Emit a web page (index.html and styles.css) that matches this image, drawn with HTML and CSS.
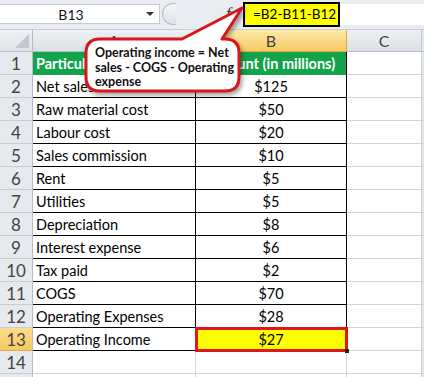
FILE: index.html
```html
<!DOCTYPE html>
<html>
<head>
<meta charset="utf-8">
<link rel="stylesheet" href="styles.css">
</head>
<body>
<div class="app">
  <div class="fbar">
    <div class="namebox"><span class="nb-text">B13</span><span class="nb-arrow"></span></div>
    <div class="grip"></div>
    <div class="fx"><span class="f">f</span></div>
    <div class="input"><span class="fbox">=B2-B11-B12</span></div>
  </div>
  <div class="sheet">
    <div class="corner"><svg width="14" height="14" viewBox="0 0 14 14"><polygon points="14,0 14,14 0,14" fill="#c3c8cf"/></svg></div>
    <div class="ch">A</div><div class="ch sel">B</div><div class="ch">C</div><div class="ch end"></div>

    <div class="rh">1</div><div class="c t hd">Particulars</div><div class="c t hd ctr">Amount (in millions)</div><div class="c"></div><div class="c end"></div>
    <div class="rh">2</div><div class="c t">Net sales</div><div class="c t ctr">$125</div><div class="c"></div><div class="c end"></div>
    <div class="rh">3</div><div class="c t">Raw material cost</div><div class="c t ctr">$50</div><div class="c"></div><div class="c end"></div>
    <div class="rh">4</div><div class="c t">Labour cost</div><div class="c t ctr">$20</div><div class="c"></div><div class="c end"></div>
    <div class="rh">5</div><div class="c t">Sales commission</div><div class="c t ctr">$10</div><div class="c"></div><div class="c end"></div>
    <div class="rh">6</div><div class="c t">Rent</div><div class="c t ctr">$5</div><div class="c"></div><div class="c end"></div>
    <div class="rh">7</div><div class="c t">Utilities</div><div class="c t ctr">$5</div><div class="c"></div><div class="c end"></div>
    <div class="rh">8</div><div class="c t">Depreciation</div><div class="c t ctr">$8</div><div class="c"></div><div class="c end"></div>
    <div class="rh">9</div><div class="c t">Interest expense</div><div class="c t ctr">$6</div><div class="c"></div><div class="c end"></div>
    <div class="rh">10</div><div class="c t">Tax paid</div><div class="c t ctr">$2</div><div class="c"></div><div class="c end"></div>
    <div class="rh">11</div><div class="c t">COGS</div><div class="c t ctr">$70</div><div class="c"></div><div class="c end"></div>
    <div class="rh">12</div><div class="c t">Operating Expenses</div><div class="c t ctr">$28</div><div class="c"></div><div class="c end"></div>
    <div class="rh sel">13</div><div class="c t">Operating Income</div><div class="c t ctr active">$27</div><div class="c"></div><div class="c end"></div>
    <div class="rh">14</div><div class="c"></div><div class="c"></div><div class="c"></div><div class="c end"></div>
    <div class="rh"></div><div class="c"></div><div class="c"></div><div class="c"></div><div class="c end"></div>
  </div>

  <svg class="callout" width="424" height="100" viewBox="0 0 424 100">
    <path d="M100 39 L182 39 L242 8 L222 39 L225 39 Q239 39 239 53 L239 77 Q239 91 225 91 L100 91 Q86 91 86 77 L86 53 Q86 39 100 39 Z" fill="#ffffff" stroke="#d9161c" stroke-width="3" stroke-linejoin="round"/>
  </svg>
  <div class="callout-text">Operating income = Net sales - COGS - Operating expense</div>
</div>
</body>
</html>
```

FILE: styles.css
```css
html, body {
  margin: 0;
  padding: 0;
  background: #ffffff;
}
.app {
  position: relative;
  width: 424px;
  height: 377px;
  overflow: hidden;
  font-family: Lato, "Open Sans", sans-serif;
}
.fbar {
  height: 29px;
  display: flex;
  align-items: flex-start;
  background: #e9ecf0;
  border-bottom: 1px solid #c9ced5;
}
.namebox {
  margin-top: 4px;
  width: 160px;
  height: 20px;
  box-sizing: border-box;
  background: #ffffff;
  border: 1px solid #c5cad1;
  border-left: none;
  display: flex;
  align-items: center;
}
.nb-text {
  width: 142px;
  text-align: center;
  font-size: 14px;
  color: #111;
}
.nb-arrow {
  width: 0;
  height: 0;
  border-left: 4px solid transparent;
  border-right: 4px solid transparent;
  border-top: 4px solid #333;
  margin-left: 4px;
}
.grip {
  margin-top: 3px;
  margin-left: 2px;
  width: 14px;
  height: 22px;
  box-sizing: border-box;
  border: 1px solid #b8bec6;
  border-right: none;
  border-radius: 11px 0 0 11px;
  background: linear-gradient(#f6f7f9, #dde1e6);
}
.fx {
  width: 66px;
  height: 29px;
  position: relative;
}
.f {
  position: absolute;
  left: 50px;
  top: 4px;
  font-family: "Liberation Serif", serif;
  font-style: italic;
  font-size: 17px;
  color: #333;
}
.input {
  flex: 1;
  margin-top: 4px;
  height: 21px;
  background: #ffffff;
  position: relative;
}
.fbox {
  position: absolute;
  left: 1px;
  top: -2px;
  width: 97px;
  height: 25px;
  box-sizing: border-box;
  border: 2px solid #000;
  background: #ffff00;
  font-size: 13.5px;
  line-height: 21px;
  padding-left: 8px;
  white-space: nowrap;
  color: #000;
}
.sheet {
  display: grid;
  grid-template-columns: 33px 163px 151px 75px 2px;
  grid-template-rows: 22px repeat(15, 23px);
}
.sheet > div {
  box-sizing: border-box;
}
.corner {
  background: linear-gradient(#eef0f3, #dfe3e8);
  border-right: 1px solid #b7bdc6;
  border-bottom: 1px solid #b7bdc6;
  display: flex;
  align-items: flex-end;
  justify-content: flex-end;
  padding: 0 3px 3px 0;
}
.ch {
  background: linear-gradient(#eef0f3, #dde1e7);
  border-right: 1px solid #c0c6ce;
  border-bottom: 1px solid #b7bdc6;
  display: flex;
  align-items: center;
  justify-content: center;
  font-size: 16px;
  color: #444;
}
.ch.sel {
  background: linear-gradient(#fdeaa9, #f8c964);
  border-right-color: #e0a844;
  border-bottom-color: #e0a844;
}
.ch.end, .c.end {
  background: #e3e6eb;
  border-right: none;
}
.rh {
  background: #e6e9ee;
  border-right: 1px solid #b7bdc6;
  border-bottom: 1px solid #c7ccd3;
  display: flex;
  align-items: center;
  justify-content: center;
  font-size: 17px;
  color: #444;
}
.rh.sel {
  background: linear-gradient(#fbdd8e, #f7c960);
  border-bottom-color: #e0a844;
}
.c {
  border-right: 1px solid #d4d4d4;
  border-bottom: 1px solid #d4d4d4;
  display: flex;
  align-items: center;
  font-size: 14.5px;
  color: #000;
  white-space: nowrap;
  overflow: hidden;
}
.c.t {
  border-right-color: #000;
  border-bottom-color: #000;
  padding-left: 3px;
}
.c.ctr {
  justify-content: center;
  padding-left: 0;
}
.c.hd {
  background: #12a34b;
  color: #fff;
  font-weight: 700;
  border-bottom-color: #12a34b;
}
.c.active {
  background: #ffff00;
  outline: 3px solid #e0161c;
  outline-offset: -2px;
  position: relative;
  overflow: visible;
}
.c.active::after {
  content: "";
  position: absolute;
  right: -3px;
  bottom: -3px;
  width: 4px;
  height: 4px;
  background: #222;
}
.callout {
  position: absolute;
  left: 0;
  top: 0;
  overflow: visible;
  filter: drop-shadow(2px 3px 2px rgba(0, 0, 0, 0.35));
}
.callout-text {
  position: absolute;
  left: 95px;
  top: 46px;
  width: 140px;
  font-size: 12.5px;
  line-height: 14.5px;
  font-weight: 700;
  color: #111;
}
```
